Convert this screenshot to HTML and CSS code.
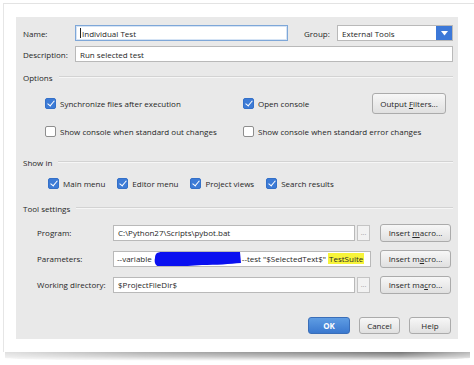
FILE: index.html
```html
<!DOCTYPE html>
<html lang="en">
<head>
    <meta charset="UTF-8">
    <title>Edit Tool</title>
    <link rel="stylesheet" href="styles.css">
</head>
<body>
    <div class="page">
        <div class="sheet">
            <div class="dialog">
                <div class="row top-row">
                    <label class="lbl lbl-head">Name:</label>
                    <div class="field name-field focused"><span class="caret"></span>Individual Test</div>
                    <label class="lbl lbl-group">Group:</label>
                    <div class="combo">
                        <span class="combo-text">External Tools</span>
                        <span class="combo-btn">
                            <svg width="7" height="5" viewBox="0 0 7 5"><path d="M0 0 H7 L3.5 4.5 Z" fill="#fff"/></svg>
                        </span>
                    </div>
                </div>
                <div class="row desc-row">
                    <label class="lbl lbl-head">Description:</label>
                    <div class="field desc-field">Run selected test</div>
                </div>

                <div class="section sec-options"><span>Options</span><div class="sep"></div></div>
                <div class="options">
                    <div class="opt-row">
                        <div class="check-item col-left"><span class="cb on"></span>Synchronize files after execution</div>
                        <div class="check-item"><span class="cb on"></span>Open console</div>
                        <button class="btn btn-filters"><span>Output <u>F</u>ilters...</span></button>
                    </div>
                    <div class="opt-row">
                        <div class="check-item col-left"><span class="cb"></span>Show console when standard out changes</div>
                        <div class="check-item"><span class="cb"></span>Show console when standard error changes</div>
                    </div>
                </div>

                <div class="section sec-show"><span>Show in</span><div class="sep"></div></div>
                <div class="show-row">
                    <div class="check-item"><span class="cb on"></span>Main menu</div>
                    <div class="check-item"><span class="cb on"></span>Editor menu</div>
                    <div class="check-item"><span class="cb on"></span>Project views</div>
                    <div class="check-item"><span class="cb on"></span>Search results</div>
                </div>

                <div class="section sec-tool"><span>Tool settings</span><div class="sep"></div></div>
                <div class="tool-row">
                    <label class="lbl lbl-tool">Program:</label>
                    <div class="field tool-field">C:\Python27\Scripts\pybot.bat</div>
                    <button class="dots">...</button>
                    <button class="btn btn-macro"><span>Insert <u>m</u>acro...</span></button>
                </div>
                <div class="tool-row">
                    <label class="lbl lbl-tool">Parameters:</label>
                    <div class="field param-field"><span>--variable&nbsp;</span><svg class="scribble" width="88" height="19" viewBox="0 0 88 19"><path d="M3 4 C10 1 30 2 48 2 C62 2 76 1 86 3 L87 14 C76 15 62 16 48 16 C30 17 16 19 6 18 C1 17 0 13 1 9 C1 6 2 5 3 4 Z" fill="#0a10f0"/></svg><span>--test "$SelectedText$"&nbsp;</span><span class="hl">TestSuite</span></div>
                    <button class="btn btn-macro btn-macro-wide"><span>Insert m<u>a</u>cro...</span></button>
                </div>
                <div class="tool-row">
                    <label class="lbl lbl-tool">Working directory:</label>
                    <div class="field tool-field">$ProjectFileDir$</div>
                    <button class="dots">...</button>
                    <button class="btn btn-macro"><span>Insert ma<u>c</u>ro...</span></button>
                </div>

                <div class="actions">
                    <button class="btn btn-ok">OK</button>
                    <button class="btn btn-cancel">Cancel</button>
                    <button class="btn btn-help">Help</button>
                </div>
            </div>
        </div>
        <div class="curl"></div>
    </div>
</body>
</html>
```

FILE: styles.css
```css
* {
    margin: 0;
    padding: 0;
    box-sizing: border-box;
}

body {
    font-family: "Open Sans", "Noto Sans", Arial, sans-serif;
    font-size: 8px;
    color: #262626;
    background: #fff;
}

.page {
    padding: 3px 0 0 3px;
}

.sheet {
    width: 471px;
    border-top: 1px solid #e3e3e3;
    border-left: 1px solid #e6e6e6;
    padding: 13px 16px 13px 12px;
    background: #fff;
}

.dialog {
    width: 442px;
    height: 322px;
    background: #e9e9e9;
    padding: 8px 5px 5px 7px;
    display: flex;
    flex-direction: column;
}

.curl {
    height: 9px;
    margin: 0 4px 0 2px;
    background: linear-gradient(to right, #e0e0e0 0%, #b0b0b0 30%, #888 70%, #747474 85%, #b8b8b8 100%);
    -webkit-mask-image: linear-gradient(to bottom, #000 0%, rgba(0,0,0,0.6) 50%, transparent 100%);
    border-radius: 0 0 50% 50% / 0 0 3px 3px;
}

/* generic pieces */

.row {
    display: flex;
    align-items: center;
    height: 16px;
}

.lbl {
    flex-shrink: 0;
    white-space: nowrap;
}

.field {
    height: 16px;
    background: #fff;
    border: 1px solid #b9b9b9;
    padding: 0 4px;
    display: flex;
    align-items: center;
    white-space: nowrap;
    overflow: hidden;
}

.btn {
    font-family: inherit;
    font-size: 8px;
    color: #262626;
    height: 18px;
    border: 1px solid #ababab;
    border-radius: 3px;
    background: linear-gradient(#f7f7f7, #e0e0e0);
    display: flex;
    align-items: center;
    justify-content: center;
    white-space: pre;
}

.btn u {
    text-underline-offset: 1px;
}

.cb {
    width: 11px;
    height: 11px;
    border: 1px solid #8e8e8e;
    border-radius: 2px;
    background: #fff;
    margin-right: 4px;
    flex-shrink: 0;
    position: relative;
}

.cb.on {
    background: #3d7bd6;
    border-color: #3470c8;
}

.cb.on:after {
    content: "";
    position: absolute;
    left: 3px;
    top: 0px;
    width: 3px;
    height: 6px;
    border-right: 1.6px solid #fff;
    border-bottom: 1.6px solid #fff;
    transform: rotate(40deg);
}

.check-item {
    display: flex;
    align-items: center;
    white-space: nowrap;
}

.section {
    display: flex;
    align-items: center;
    height: 12px;
}

.section .sep {
    flex: 1;
    height: 2px;
    border-top: 1px solid #d3d3d3;
    border-bottom: 1px solid #f6f6f6;
    margin-left: 6px;
}

/* name / group / description */

.lbl-head {
    width: 52px;
}

.name-field {
    width: 213px;
}

.focused {
    border-color: #7ea7d8;
    box-shadow: inset 0 0 0 1px #d6e4f5;
}

.caret {
    width: 1px;
    height: 10px;
    background: #222;
    margin-right: 1px;
}

.lbl-group {
    margin-left: 16px;
    width: 33px;
}

.combo {
    width: 116px;
    height: 16px;
    background: #fff;
    border: 1px solid #b9b9b9;
    display: flex;
    align-items: stretch;
}

.combo-text {
    flex: 1;
    padding-left: 4px;
    display: flex;
    align-items: center;
}

.combo-btn {
    width: 16px;
    background: #3c78d8;
    display: flex;
    align-items: center;
    justify-content: center;
}

.desc-row {
    margin-top: 5px;
}

.desc-field {
    flex: 1;
}

/* options */

.sec-options {
    margin-top: 9px;
}

.options {
    padding-left: 22px;
    margin-top: 10px;
}

.opt-row {
    display: flex;
    align-items: center;
    height: 21px;
}

.opt-row + .opt-row {
    margin-top: 7px;
}

.col-left {
    width: 198px;
}

.btn-filters {
    margin-left: auto;
    margin-right: 7px;
    width: 74px;
    height: 21px;
}

/* show in */

.sec-show {
    margin-top: 14px;
}

.show-row {
    display: flex;
    align-items: center;
    height: 14px;
    margin-top: 8px;
    padding-left: 25px;
    gap: 12px;
}

/* tool settings */

.sec-tool {
    margin-top: 12px;
}

.tool-row {
    display: flex;
    align-items: center;
    height: 17px;
    margin-top: 9px;
    padding-left: 14px;
}

.sec-tool + .tool-row {
    margin-top: 10px;
}

.lbl-tool {
    width: 76px;
}

.tool-field {
    width: 242px;
}

.param-field {
    width: 258px;
    padding-left: 3px;
}

.scribble {
    flex-shrink: 0;
}

.hl {
    background: #f7f43a;
    padding: 0 1px;
}

.dots {
    width: 13px;
    height: 16px;
    margin-left: 2px;
    border: 1px solid #c4c4c4;
    background: #f2f2f2;
    color: #9a9a9a;
    font-family: inherit;
    font-size: 7px;
    line-height: 10px;
}

.btn-macro {
    width: 71px;
    margin-left: 10px;
}

.btn-macro-wide {
    margin-left: 9px;
}

/* bottom buttons */

.actions {
    margin-top: auto;
    display: flex;
    justify-content: flex-end;
    gap: 9px;
    padding-right: 2px;
}

.actions .btn {
    height: 17px;
    width: 42px;
}

.btn-ok {
    background: linear-gradient(#5f9de3, #3a78cf);
    border-color: #3a6eb8;
    color: #fff;
    font-weight: bold;
}

.actions .btn-cancel {
    width: 41px;
}
```
